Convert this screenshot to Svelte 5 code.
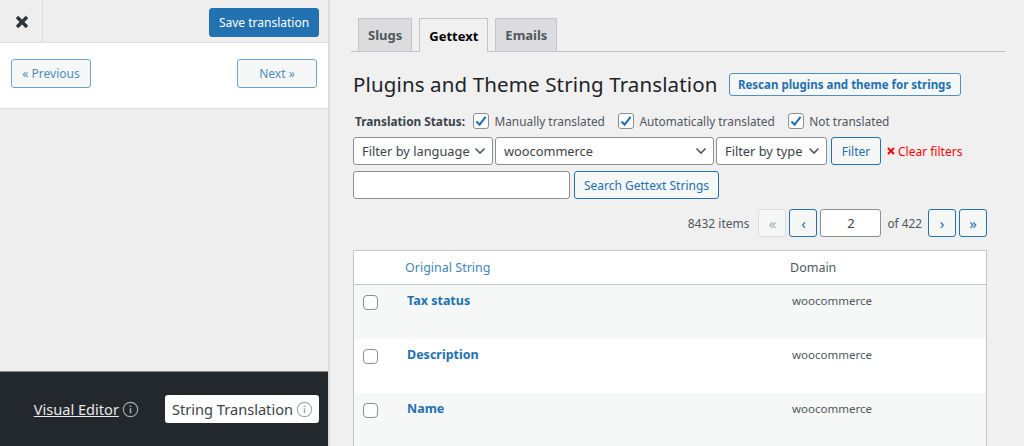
<script>
  const rows = [
    { name: 'Tax status', alt: true },
    { name: 'Description', alt: false },
    { name: 'Name', alt: true }
  ];
  const statuses = ['Manually translated', 'Automatically translated', 'Not translated'];
</script>

{#snippet chevron()}
  <svg class="chev" viewBox="0 0 12 8" width="12" height="8" aria-hidden="true"><path d="M1.5 1.5 6 6l4.5-4.5" fill="none" stroke="#50575e" stroke-width="1.6"/></svg>
{/snippet}

{#snippet info(color)}
  <svg class="info" viewBox="0 0 18 18" width="17" height="17" aria-hidden="true">
    <circle cx="9" cy="9" r="7.6" fill="none" stroke={color} stroke-width="1.2"/>
    <rect x="8.2" y="7.6" width="1.6" height="5.4" fill={color}/>
    <rect x="8.2" y="4.8" width="1.6" height="1.6" fill={color}/>
  </svg>
{/snippet}

<div class="page">
  <aside class="side">
    <div class="topbar">
      <div class="close">
        <svg viewBox="0 0 14 14" width="14" height="14" aria-hidden="true"><path d="M2 2l10 10M12 2 2 12" stroke="#2c3338" stroke-width="3.4" fill="none"/></svg>
      </div>
      <button class="save">Save translation</button>
    </div>
    <div class="nav">
      <button class="btn nav-btn">« Previous</button>
      <button class="btn nav-btn">Next »</button>
    </div>
    <div class="spacer"></div>
    <div class="foot">
      <div class="mode">
        <a href="#v" class="mode-link">Visual Editor</a>
        {@render info('#a7aaad')}
      </div>
      <div class="mode active">
        <span>String Translation</span>
        {@render info('#a7aaad')}
      </div>
    </div>
  </aside>

  <main class="main">
    <div class="tabs">
      <span class="tab">Slugs</span>
      <span class="tab on">Gettext</span>
      <span class="tab">Emails</span>
    </div>

    <div class="head">
      <h1>Plugins and Theme String Translation</h1>
      <button class="btn rescan">Rescan plugins and theme for strings</button>
    </div>

    <div class="status">
      <strong>Translation Status:</strong>
      {#each statuses as s}
        <span class="check">
          <span class="box">
            <svg viewBox="0 0 16 16" width="16" height="16" aria-hidden="true"><path d="M3.4 8.4 6.6 11.6 12.6 3.8" fill="none" stroke="#2271b1" stroke-width="2.1"/></svg>
          </span>
          {s}
        </span>
      {/each}
    </div>

    <div class="filters">
      <div class="select lang"><span>Filter by language</span>{@render chevron()}</div>
      <div class="select domain"><span>woocommerce</span>{@render chevron()}</div>
      <div class="select type"><span>Filter by type</span>{@render chevron()}</div>
      <button class="btn filter">Filter</button>
      <span class="clear"><svg viewBox="0 0 10 10" width="8" height="8" aria-hidden="true"><path d="M1.2 1.2l7.6 7.6M8.8 1.2 1.2 8.8" stroke="#f00" stroke-width="2.4"/></svg>Clear filters</span>
    </div>

    <div class="search">
      <div class="input"></div>
      <button class="btn searchbtn">Search Gettext Strings</button>
    </div>

    <div class="pager">
      <span class="count">8432 items</span>
      <span class="pg off">«</span>
      <span class="pg">‹</span>
      <span class="current">2</span>
      <span class="of">of 422</span>
      <span class="pg">›</span>
      <span class="pg">»</span>
    </div>

    <div class="table">
      <div class="thead">
        <span class="c-check"></span>
        <a href="#o" class="c-name orig">Original String</a>
        <span class="c-dom">Domain</span>
      </div>
      {#each rows as r}
        <div class="row" class:alt={r.alt}>
          <span class="c-check"><span class="cb"></span></span>
          <a href="#r" class="c-name rname">{r.name}</a>
          <span class="c-dom rdom">woocommerce</span>
        </div>
      {/each}
    </div>
  </main>
</div>

<style>
  :global(body) {
    margin: 0;
    background: #f0f0f1;
    overflow: hidden;
  }
  .page {
    display: flex;
    width: 1024px;
    height: 446px;
    overflow: hidden;
    font-family: "Noto Sans", "Open Sans", sans-serif;
    font-size: 13px;
    color: #50575e;
    background: #f0f0f1;
  }
  button {
    font-family: inherit;
    cursor: pointer;
    margin: 0;
  }
  .side {
    width: 328px;
    flex: none;
    display: flex;
    flex-direction: column;
    background: #eee;
    border-right: 2px solid #ddd;
  }
  .topbar {
    height: 43px;
    flex: none;
    box-sizing: border-box;
    display: flex;
    align-items: center;
    justify-content: space-between;
    padding-right: 9px;
    border-bottom: 1px solid #ddd;
  }
  .close {
    width: 43px;
    height: 42px;
    display: flex;
    align-items: center;
    justify-content: center;
    padding: 2px 0 0 2px;
    border-right: 1px solid #ddd;
    box-sizing: border-box;
  }
  .save {
    width: 110px;
    height: 29px;
    margin-top: 2px;
    padding: 0;
    border: 1px solid #2271b1;
    border-radius: 3px;
    background: #2271b1;
    color: #fff;
    font-size: 12px;
  }
  .btn {
    border: 1px solid #2271b1;
    border-radius: 3px;
    background: #f6f7f7;
    color: #2271b1;
    font-size: 12px;
    padding: 0;
  }
  .nav {
    height: 66px;
    flex: none;
    box-sizing: border-box;
    background: #fff;
    border-bottom: 1px solid #ddd;
    display: flex;
    justify-content: space-between;
    align-items: flex-start;
    padding: 16px 11px 0 11px;
  }
  .nav-btn {
    width: 80px;
    height: 29px;
    font-size: 12px;
    border-color: #6fa3cf;
    color: #4f8cc0;
  }
  .spacer {
    flex: 1;
  }
  .foot {
    height: 75px;
    flex: none;
    box-sizing: border-box;
    background: #23282d;
    border-top: 1px solid #888;
    display: flex;
    align-items: center;
    justify-content: flex-end;
    gap: 26px;
    padding: 0 9px 0 0;
  }
  .mode {
    display: flex;
    align-items: center;
    gap: 3px;
    font-size: 14.6px;
    color: #e8e8e8;
  }
  .mode-link {
    color: #e8e8e8;
    text-decoration: underline;
  }
  .active {
    background: #fff;
    color: #3c434a;
    border-radius: 3px;
    height: 28px;
    padding: 0 6px 0 7px;
  }
  .main {
    flex: 1;
    min-width: 0;
    padding: 18px 18px 0 23px;
    box-sizing: border-box;
  }
  .tabs {
    display: flex;
    gap: 7px;
    height: 33px;
    padding-left: 7px;
    margin-left: -2px;
    border-bottom: 1px solid #c3c4c7;
    box-sizing: content-box;
  }
  .tab {
    display: flex;
    align-items: center;
    justify-content: center;
    box-sizing: border-box;
    height: 33px;
    padding: 0 9px;
    background: #dcdcde;
    border: 1px solid #c3c4c7;
    border-bottom: none;
    font-size: 13px;
    font-weight: 700;
    color: #50575e;
  }
  .tab.on {
    background: #f0f0f1;
    color: #000;
    height: 34px;
  }
  .head {
    display: flex;
    align-items: center;
    gap: 11px;
    margin-top: 20px;
    height: 24px;
  }
  h1 {
    margin: 0;
    font-size: 20.5px;
    font-weight: 400;
    color: #1d2327;
    white-space: nowrap;
    letter-spacing: 0.13px;
  }
  .rescan {
    width: 232px;
    height: 23px;
    font-weight: 700;
    font-size: 11.5px;
    background: #f6f7f7;
    border-color: #4f8fc4;
  }
  .status {
    display: flex;
    align-items: center;
    margin-top: 16px;
    padding-left: 2px;
    height: 18px;
    font-size: 11.85px;
  }
  .status strong {
    font-size: 11.8px;
    color: #3c434a;
    margin-right: 8px;
  }
  .check {
    display: inline-flex;
    align-items: center;
    gap: 5.5px;
    margin-right: 13px;
    white-space: nowrap;
  }
  .box {
    width: 16px;
    height: 16px;
    box-sizing: border-box;
    border: 1px solid #8c8f94;
    border-radius: 3px;
    background: #fff;
    display: flex;
    align-items: center;
    justify-content: center;
  }
  .box svg {
    flex: none;
  }
  .filters {
    display: flex;
    align-items: center;
    gap: 2px;
    margin-top: 7px;
    height: 28px;
  }
  .select, .input, .current {
    box-sizing: border-box;
    background: #fff;
    border: 1px solid #8c8f94;
    border-radius: 3px;
    height: 28px;
  }
  .select {
    display: flex;
    align-items: center;
    justify-content: space-between;
    padding: 0 6px 0 8px;
    font-size: 12.8px;
    color: #3c434a;
    white-space: nowrap;
  }
  .lang { width: 140px; }
  .domain { width: 219px; }
  .type { width: 111px; }
  .filter {
    width: 50px;
    height: 28px;
    margin-left: 2px;
  }
  .clear {
    display: inline-flex;
    align-items: center;
    gap: 3px;
    margin-left: 4px;
    color: #f00;
    font-size: 12px;
    white-space: nowrap;
  }
  .search {
    display: flex;
    gap: 4px;
    margin-top: 6px;
    height: 28px;
  }
  .input {
    width: 217px;
  }
  .searchbtn {
    width: 145px;
    height: 28px;
  }
  .pager {
    display: flex;
    align-items: center;
    justify-content: flex-end;
    gap: 3px;
    margin: 10px 19px 0 0;
    height: 28px;
  }
  .count {
    margin-right: 6px;
    font-size: 12px;
  }
  .pg {
    box-sizing: border-box;
    width: 28px;
    height: 28px;
    display: flex;
    align-items: center;
    justify-content: center;
    border: 1px solid #2271b1;
    border-radius: 3px;
    background: #f6f7f7;
    color: #2271b1;
    font-size: 15px;
  }
  .pg.off {
    border-color: #dcdcde;
    color: #a7aaad;
  }
  .current {
    width: 61px;
    display: flex;
    align-items: center;
    justify-content: center;
    color: #3c434a;
    font-size: 13px;
  }
  .of {
    margin: 0 3px;
    font-size: 11.8px;
  }
  .table {
    margin: 13px 19px 0 0;
    background: #fff;
    border: 1px solid #c3c4c7;
    border-bottom: none;
  }
  .thead {
    display: flex;
    align-items: center;
    height: 34px;
    box-sizing: border-box;
    border-bottom: 1px solid #c3c4c7;
    background: #fff;
  }
  .c-check {
    width: 51px;
    flex: none;
    display: flex;
    padding-left: 9px;
    box-sizing: border-box;
  }
  .c-name {
    width: 385px;
    flex: none;
  }
  .orig {
    color: #2271b1;
    text-decoration: none;
    opacity: 0.85;
    font-size: 12.5px;
  }
  .c-dom {
    font-size: 12.5px;
  }
  .row {
    display: flex;
    height: 54px;
    box-sizing: border-box;
    padding-top: 7px;
    background: #fff;
  }
  .row.alt {
    background: #f6f7f7;
  }
  .row .c-check {
    padding-top: 3px;
  }
  .rname {
    font-weight: 700;
    font-size: 12.5px;
    color: #2271b1;
    text-decoration: none;
    line-height: 18px;
    padding-left: 2px;
    width: 383px;
  }
  .rdom {
    font-size: 11.5px;
    line-height: 18px;
    padding-left: 2px;
  }
  .cb {
    display: block;
    box-sizing: border-box;
    width: 15px;
    height: 15px;
    background: #fff;
    border: 1px solid #8c8f94;
    border-radius: 4px;
  }
</style>
